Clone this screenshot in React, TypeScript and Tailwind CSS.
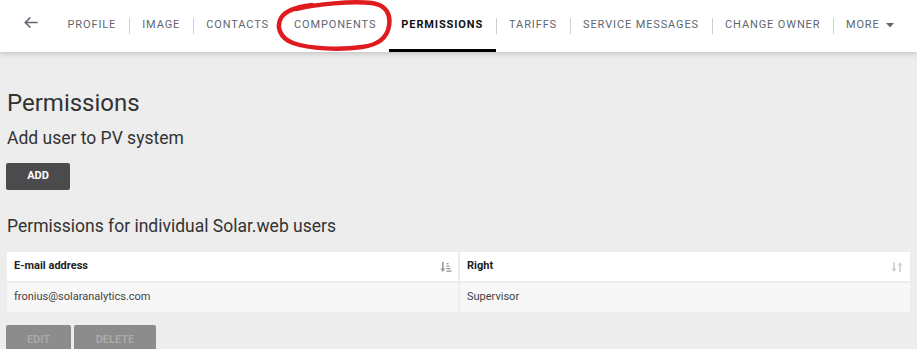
import React from "react";

const tabs = [
  { label: "PROFILE" },
  { label: "IMAGE" },
  { label: "CONTACTS" },
  { label: "COMPONENTS" },
  { label: "PERMISSIONS", active: true },
  { label: "TARIFFS" },
  { label: "SERVICE MESSAGES" },
  { label: "CHANGE OWNER" },
];

function SortDownIcon() {
  return (
    <svg width="12" height="12" viewBox="0 0 12 12" fill="#9a9a9a">
      <rect x="2" y="1" width="1.6" height="8" />
      <path d="M0.3 7.5 L5.3 7.5 L2.8 11 Z" />
      <rect x="6.5" y="2" width="2" height="1.3" />
      <rect x="6.5" y="4.5" width="3" height="1.3" />
      <rect x="6.5" y="7" width="4" height="1.3" />
      <rect x="6.5" y="9.5" width="5" height="1.3" />
    </svg>
  );
}

function SortBothIcon() {
  return (
    <svg width="12" height="12" viewBox="0 0 12 12" fill="#cfcfcf">
      <rect x="2.2" y="1" width="1.6" height="8" />
      <path d="M0.5 7.5 L5.5 7.5 L3 11 Z" />
      <rect x="8.2" y="3" width="1.6" height="8" />
      <path d="M6.5 4.5 L11.5 4.5 L9 1 Z" />
    </svg>
  );
}

const sepBefore: Record<string, boolean> = {
  IMAGE: true,
  CONTACTS: true,
  TARIFFS: true,
  "SERVICE MESSAGES": true,
  "CHANGE OWNER": true,
};

export default function App() {
  return (
    <div
      className="w-[917px] h-[349px] overflow-hidden bg-[#ecedec] text-[#333]"
      style={{ fontFamily: "Roboto, 'Liberation Sans', sans-serif" }}
    >
      <header className="relative z-10 h-[52px] bg-white shadow-[0_1px_6px_rgba(0,0,0,0.22)] flex items-stretch">
        <div className="w-[55px] flex items-center pl-[24px]">
          <svg width="14" height="11" viewBox="0 0 14 11" fill="none" stroke="#5f6670" strokeWidth="1.7" strokeLinecap="round" strokeLinejoin="round" className="-mt-[7px]">
            <path d="M13 5.5 H1.5" />
            <path d="M5.8 1 L1.3 5.5 L5.8 10" />
          </svg>
        </div>
        {tabs.map((t) => (
          <div key={t.label} className="flex items-stretch">
            {sepBefore[t.label] && <div className="w-px self-center h-[16px] bg-[#cfcfcf]" />}
            <div
              className={
                "relative flex items-center px-[12.5px] text-[11px] tracking-[0.08em] whitespace-nowrap " +
                (t.active ? "font-bold text-[#111]" : "text-[#5f6670]")
              }
            >
              <span className="-mt-px">{t.label}</span>
              {t.active && <div className="absolute left-0 right-0 bottom-0 h-[3px] bg-black" />}
            </div>
          </div>
        ))}
        <div className="w-px self-center h-[16px] bg-[#cfcfcf]" />
        <div className="flex items-center pl-[12px] text-[11px] tracking-[0.08em] text-[#5f6670] whitespace-nowrap">
          <span className="-mt-px">MORE</span>
          <svg width="8" height="5" viewBox="0 0 8 5" className="ml-[6px] -mt-[2px]">
            <path d="M0 0 H8 L4 4.5 Z" fill="#5f6670" />
          </svg>
        </div>
        <svg className="absolute left-0 top-0 pointer-events-none" width="917" height="56" viewBox="0 0 917 56" fill="none">
          <path
            d="M296 9 C318 4 350 1 372 3 C386 5 391 14 389 26 C387 38 378 45 362 47 C340 50 310 49 293 43 C280 38 276 27 281 18 C285 11 295 7 312 5"
            stroke="#e01b1f"
            strokeWidth="4.5"
            strokeLinecap="round"
          />
        </svg>
      </header>

      <main className="pl-[7px] pr-[7px]">
        <h1 className="mt-[37px] text-[24px] leading-[28px] text-[#333]">Permissions</h1>
        <h2 className="mt-[10px] text-[17.5px] leading-[22px] text-[#333]">Add user to PV system</h2>
        <button className="mt-[14px] -ml-px w-[64px] h-[27px] rounded-[2px] bg-[#4b4b4d] text-white text-[11px] font-bold block">
          ADD
        </button>
        <h2 className="mt-[25px] text-[17.5px] leading-[22px] text-[#333]">Permissions for individual Solar.web users</h2>
        <div className="mt-[15px] w-[903px] flex flex-col gap-[2px]">
          <div className="flex gap-[2px] h-[29px]">
            <div className="w-[451px] bg-white flex items-center justify-between pl-[7px] pr-[6px]">
              <span className="text-[11px] font-bold text-[#222]">E-mail address</span>
              <SortDownIcon />
            </div>
            <div className="flex-1 bg-white flex items-center justify-between pl-[7px] pr-[7px]">
              <span className="text-[11px] font-bold text-[#222]">Right</span>
              <SortBothIcon />
            </div>
          </div>
          <div className="flex gap-[2px] h-[29px]">
            <div className="w-[451px] bg-[#f7f7f7] flex items-center pl-[7px]">
              <span className="text-[11px] text-[#444]">fronius@solaranalytics.com</span>
            </div>
            <div className="flex-1 bg-[#f7f7f7] flex items-center pl-[7px]">
              <span className="text-[11px] text-[#444]">Supervisor</span>
            </div>
          </div>
        </div>
        <div className="mt-[13px] -ml-px flex gap-[3px]">
          <button className="w-[65px] h-[30px] rounded-[2px] bg-[#8c8c8c] text-[#a9a9a9] text-[11px] font-bold">EDIT</button>
          <button className="w-[82px] h-[30px] rounded-[2px] bg-[#8c8c8c] text-[#a9a9a9] text-[11px] font-bold">DELETE</button>
        </div>
      </main>
    </div>
  );
}
